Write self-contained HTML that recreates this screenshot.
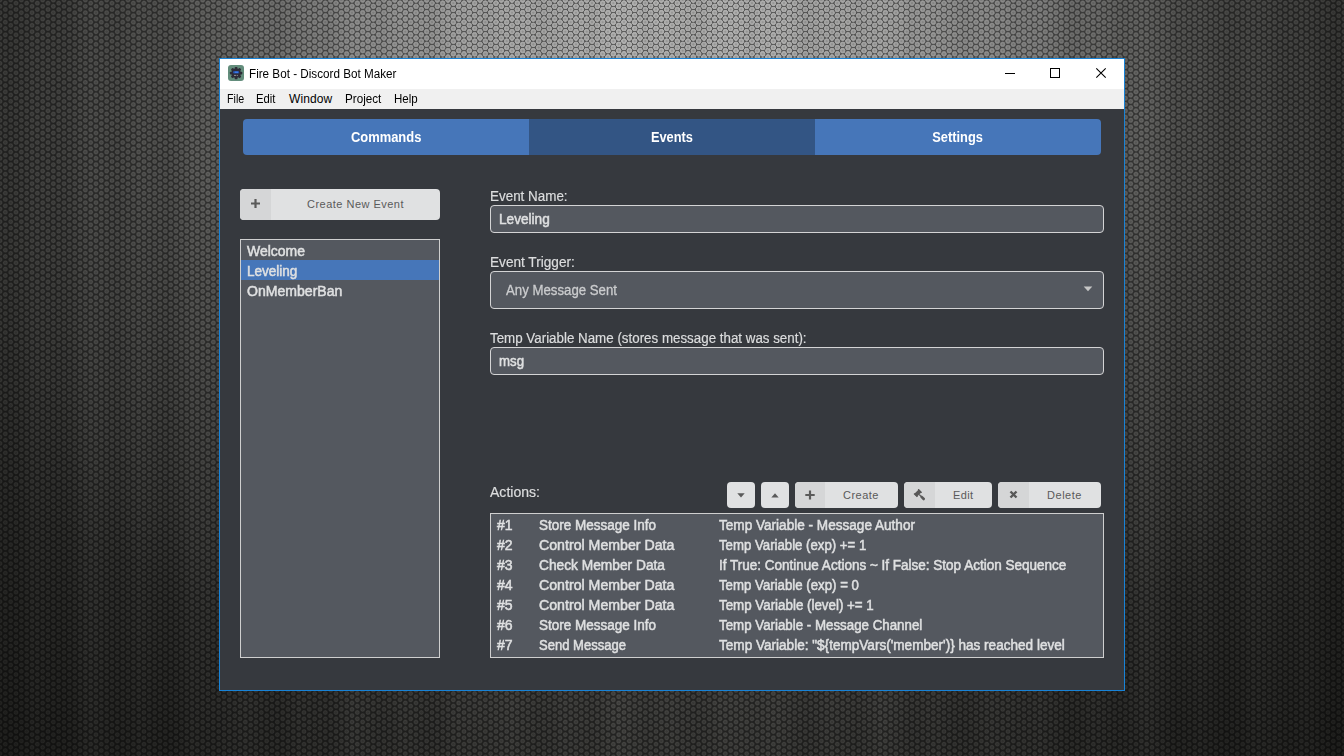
<!DOCTYPE html>
<html>
<head>
<meta charset="utf-8">
<title>Fire Bot - Discord Bot Maker</title>
<style>
*{box-sizing:border-box;margin:0;padding:0}
html,body{width:1344px;height:756px;overflow:hidden}
body{position:relative;background:#262626;font-family:"Liberation Sans",sans-serif;}
#bg{position:absolute;left:0;top:0;width:1344px;height:756px;
 background:radial-gradient(ellipse 820px 400px at 672px 270px, rgba(255,255,255,.05) 0%, rgba(255,255,255,.045) 55%, rgba(255,255,255,.02) 80%, rgba(255,255,255,0) 100%), radial-gradient(ellipse 520px 260px at 672px 780px, rgba(255,250,240,0.05) 0%, rgba(255,250,240,0.03) 50%, rgba(255,250,240,0) 100%), radial-gradient(circle 1010px at 672px 0px, rgb(172,172,171) 0.0%, rgb(168,168,167) 11.9%, rgb(156,156,155) 22.8%, rgb(145,145,144) 27.7%, rgb(125,125,124) 35.6%, rgb(99,99,97) 44.6%, rgb(81,81,79) 51.5%, rgb(71,71,69) 57.4%, rgb(62,62,60) 64.4%, rgb(55,55,53) 71.3%, rgb(48,48,46) 77.2%, rgb(40,40,38) 87.1%, rgb(34,34,32) 97.0%, rgb(33,33,31) 100.0%);
}
#streaks{position:absolute;left:0;top:0;width:1344px;height:756px;background:repeating-linear-gradient(90deg, rgba(0,0,0,0) 0px, rgba(0,0,0,.035) 9px, rgba(0,0,0,0) 21px, rgba(255,255,255,.02) 34px, rgba(0,0,0,0) 53px),repeating-linear-gradient(90deg, rgba(0,0,0,0) 0px, rgba(0,0,0,.03) 29px, rgba(0,0,0,0) 67px, rgba(255,255,255,.02) 95px, rgba(0,0,0,0) 131px)}
#tex{position:absolute;left:0;top:0;width:1344px;height:756px}
#win{position:absolute;left:219px;top:58px;width:906px;height:633px;border:1px solid #1883d7;background:#36393e;overflow:hidden}
/* everything inside #win is positioned relative to window inner origin (220,59) */
#titlebar{position:absolute;left:0;top:0;width:904px;height:30px;background:#fff}
#menubar{position:absolute;left:0;top:30px;width:904px;height:20px;background:#f0f0f0}
.t{position:absolute;white-space:nowrap;line-height:1;display:block}
.title{left:29px;top:8px;font-size:12px;color:#000;height:14px;line-height:14px}
.mi{top:33px;font-size:12px;color:#000;height:14px;line-height:14px}
.tab{position:absolute;top:60px;height:36px;width:286px;background:#4676b9;color:#fff;font-weight:bold;font-size:14px;text-align:center;line-height:36px}
.tab.sel{background:#335584}
.btn{position:absolute;background:#e0e1e2;border-radius:4px;color:#5a5a5a;font-size:11px;overflow:hidden}
.btn .ic{position:absolute;left:0;top:0;bottom:0;background:#d5d6d7}
.lbl{font-size:14px;color:#dcddde;-webkit-text-stroke:0.2px #dcddde}
.inp{position:absolute;left:270px;width:614px;background:#54585f;border:1px solid #d4d4d5;border-radius:4px}
.box{position:absolute;background:#54585f;border:1px solid #cfcfcf}
.li{font-size:14px;font-weight:normal;color:#dfe0e1;-webkit-text-stroke:0.5px #dfe0e1}
.row{position:absolute;left:0;width:100%;height:20px}
</style>
</head>
<body>
<div id="bg"></div>
<div id="streaks"></div>
<svg id="tex" width="1344" height="756">
 <defs>
  <radialGradient id="dgA" cx="50%" cy="50%" r="50%">
   <stop offset="0" stop-color="#4c4c4c"/>
   <stop offset="0.25" stop-color="#3a3a3a"/>
   <stop offset="0.48" stop-color="#000"/>
   <stop offset="0.84" stop-color="#000"/>
   <stop offset="1" stop-color="#fff"/>
  </radialGradient>
  <radialGradient id="dgB" cx="50%" cy="50%" r="50%">
   <stop offset="0" stop-color="#000"/>
   <stop offset="0.60" stop-color="#000"/>
   <stop offset="0.80" stop-color="#fff"/>
   <stop offset="0.88" stop-color="#fff"/>
   <stop offset="1" stop-color="#000"/>
  </radialGradient>
  <pattern id="hpA" width="32" height="19" patternUnits="userSpaceOnUse"><rect width="32" height="19" fill="#fff"/><circle cx="0.000" cy="0.000" r="3.08" fill="url(#dgA)"/><circle cx="0.000" cy="6.333" r="3.08" fill="url(#dgA)"/><circle cx="0.000" cy="12.667" r="3.08" fill="url(#dgA)"/><circle cx="0.000" cy="19.000" r="3.08" fill="url(#dgA)"/><circle cx="5.333" cy="-3.167" r="3.08" fill="url(#dgA)"/><circle cx="5.333" cy="3.167" r="3.08" fill="url(#dgA)"/><circle cx="5.333" cy="9.500" r="3.08" fill="url(#dgA)"/><circle cx="5.333" cy="15.833" r="3.08" fill="url(#dgA)"/><circle cx="5.333" cy="22.167" r="3.08" fill="url(#dgA)"/><circle cx="10.667" cy="0.000" r="3.08" fill="url(#dgA)"/><circle cx="10.667" cy="6.333" r="3.08" fill="url(#dgA)"/><circle cx="10.667" cy="12.667" r="3.08" fill="url(#dgA)"/><circle cx="10.667" cy="19.000" r="3.08" fill="url(#dgA)"/><circle cx="16.000" cy="-3.167" r="3.08" fill="url(#dgA)"/><circle cx="16.000" cy="3.167" r="3.08" fill="url(#dgA)"/><circle cx="16.000" cy="9.500" r="3.08" fill="url(#dgA)"/><circle cx="16.000" cy="15.833" r="3.08" fill="url(#dgA)"/><circle cx="16.000" cy="22.167" r="3.08" fill="url(#dgA)"/><circle cx="21.333" cy="0.000" r="3.08" fill="url(#dgA)"/><circle cx="21.333" cy="6.333" r="3.08" fill="url(#dgA)"/><circle cx="21.333" cy="12.667" r="3.08" fill="url(#dgA)"/><circle cx="21.333" cy="19.000" r="3.08" fill="url(#dgA)"/><circle cx="26.667" cy="-3.167" r="3.08" fill="url(#dgA)"/><circle cx="26.667" cy="3.167" r="3.08" fill="url(#dgA)"/><circle cx="26.667" cy="9.500" r="3.08" fill="url(#dgA)"/><circle cx="26.667" cy="15.833" r="3.08" fill="url(#dgA)"/><circle cx="26.667" cy="22.167" r="3.08" fill="url(#dgA)"/><circle cx="32.000" cy="0.000" r="3.08" fill="url(#dgA)"/><circle cx="32.000" cy="6.333" r="3.08" fill="url(#dgA)"/><circle cx="32.000" cy="12.667" r="3.08" fill="url(#dgA)"/><circle cx="32.000" cy="19.000" r="3.08" fill="url(#dgA)"/></pattern>
  <pattern id="hpB" width="32" height="19" patternUnits="userSpaceOnUse"><rect width="32" height="19" fill="#000"/><circle cx="0.000" cy="0.000" r="3.08" fill="url(#dgB)"/><circle cx="0.000" cy="6.333" r="3.08" fill="url(#dgB)"/><circle cx="0.000" cy="12.667" r="3.08" fill="url(#dgB)"/><circle cx="0.000" cy="19.000" r="3.08" fill="url(#dgB)"/><circle cx="5.333" cy="-3.167" r="3.08" fill="url(#dgB)"/><circle cx="5.333" cy="3.167" r="3.08" fill="url(#dgB)"/><circle cx="5.333" cy="9.500" r="3.08" fill="url(#dgB)"/><circle cx="5.333" cy="15.833" r="3.08" fill="url(#dgB)"/><circle cx="5.333" cy="22.167" r="3.08" fill="url(#dgB)"/><circle cx="10.667" cy="0.000" r="3.08" fill="url(#dgB)"/><circle cx="10.667" cy="6.333" r="3.08" fill="url(#dgB)"/><circle cx="10.667" cy="12.667" r="3.08" fill="url(#dgB)"/><circle cx="10.667" cy="19.000" r="3.08" fill="url(#dgB)"/><circle cx="16.000" cy="-3.167" r="3.08" fill="url(#dgB)"/><circle cx="16.000" cy="3.167" r="3.08" fill="url(#dgB)"/><circle cx="16.000" cy="9.500" r="3.08" fill="url(#dgB)"/><circle cx="16.000" cy="15.833" r="3.08" fill="url(#dgB)"/><circle cx="16.000" cy="22.167" r="3.08" fill="url(#dgB)"/><circle cx="21.333" cy="0.000" r="3.08" fill="url(#dgB)"/><circle cx="21.333" cy="6.333" r="3.08" fill="url(#dgB)"/><circle cx="21.333" cy="12.667" r="3.08" fill="url(#dgB)"/><circle cx="21.333" cy="19.000" r="3.08" fill="url(#dgB)"/><circle cx="26.667" cy="-3.167" r="3.08" fill="url(#dgB)"/><circle cx="26.667" cy="3.167" r="3.08" fill="url(#dgB)"/><circle cx="26.667" cy="9.500" r="3.08" fill="url(#dgB)"/><circle cx="26.667" cy="15.833" r="3.08" fill="url(#dgB)"/><circle cx="26.667" cy="22.167" r="3.08" fill="url(#dgB)"/><circle cx="32.000" cy="0.000" r="3.08" fill="url(#dgB)"/><circle cx="32.000" cy="6.333" r="3.08" fill="url(#dgB)"/><circle cx="32.000" cy="12.667" r="3.08" fill="url(#dgB)"/><circle cx="32.000" cy="19.000" r="3.08" fill="url(#dgB)"/></pattern>
  <mask id="hmA" maskUnits="userSpaceOnUse" x="0" y="0" width="1344" height="756"><rect width="1344" height="756" fill="url(#hpA)"/></mask>
  <mask id="hmB" maskUnits="userSpaceOnUse" x="0" y="0" width="1344" height="756"><rect width="1344" height="756" fill="url(#hpB)"/></mask>
  <radialGradient id="rgB" gradientUnits="userSpaceOnUse" cx="672" cy="0" r="1010">
   <stop offset="0" stop-color="#000" stop-opacity="0"/>
   <stop offset="0.18" stop-color="#000" stop-opacity="0.04"/>
   <stop offset="0.40" stop-color="#000" stop-opacity="0.20"/>
   <stop offset="0.58" stop-color="#000" stop-opacity="0.30"/>
   <stop offset="1" stop-color="#000" stop-opacity="0.34"/>
  </radialGradient>
 </defs>
 <rect width="1344" height="756" fill="#000" opacity="0.47" mask="url(#hmA)"/>
 <rect width="1344" height="756" fill="url(#rgB)" mask="url(#hmB)"/>
</svg>

<div id="win">
 <div id="titlebar"></div>
 <div id="menubar"></div>
 <!-- app icon -->
 <svg class="t" style="left:8px;top:6px" width="16" height="16" viewBox="0 0 16 16">
  <rect x="0" y="0" width="16" height="16" rx="3" fill="#638d7c"/>
  <g fill="#2e2c38">
   <circle cx="8.1" cy="8.1" r="4.7"/>
   <rect x="6.7" y="1.9" width="2.8" height="12.4" rx=".9"/>
   <rect x="1.9" y="6.7" width="12.4" height="2.8" rx=".9"/>
   <rect x="6.7" y="1.9" width="2.8" height="12.4" rx=".9" transform="rotate(45 8.1 8.1)"/>
   <rect x="6.7" y="1.9" width="2.8" height="12.4" rx=".9" transform="rotate(-45 8.1 8.1)"/>
  </g>
  <rect x="5" y="6.1" width="6.2" height="2.4" rx="1.1" fill="#264fa6"/>
  <rect x="6.6" y="6.6" width="3.6" height="1.5" rx=".7" fill="#3b7be8"/>
  <rect x="6.2" y="9.9" width="1.6" height=".9" fill="#b9b9bd"/>
  <rect x="8.7" y="9.9" width="1.1" height=".9" fill="#a3a3a8"/>
 </svg>
 <span class="t title" id="ttl" style="transform-origin:0 50%;transform:scaleX(0.9737);">Fire Bot - Discord Bot Maker</span>
 <!-- window controls -->
 <svg class="t" style="left:780px;top:5px" width="120" height="20" viewBox="0 0 120 20">
  <rect x="5" y="9" width="10" height="1" fill="#000"/>
  <rect x="50.5" y="4.5" width="9" height="9" fill="none" stroke="#000" stroke-width="1"/>
  <path d="M96.3 4.3 L105.7 13.7 M105.7 4.3 L96.3 13.7" stroke="#000" stroke-width="1.1" fill="none"/>
 </svg>
 <span class="t mi" id="m1" style="transform-origin:0 50%;transform:scaleX(0.8892);left:7px">File</span>
 <span class="t mi" id="m2" style="transform-origin:0 50%;transform:scaleX(0.9426);left:36px">Edit</span>
 <span class="t mi" id="m3" style="letter-spacing:0.119px;left:69px">Window</span>
 <span class="t mi" id="m4" style="transform-origin:0 50%;transform:scaleX(0.9716);left:125px">Project</span>
 <span class="t mi" id="m5" style="transform-origin:0 50%;transform:scaleX(0.9600);left:174px">Help</span>

 <!-- tabs -->
 <div class="tab" style="left:23px;border-radius:4px 0 0 4px"><span id="tb1" style="display:inline-block;transform:scaleX(0.9235);">Commands</span></div>
 <div class="tab sel" style="left:309px"><span id="tb2" style="display:inline-block;transform:scaleX(0.9146);">Events</span></div>
 <div class="tab" style="left:595px;border-radius:0 4px 4px 0"><span id="tb3" style="display:inline-block;transform:scaleX(0.9161);">Settings</span></div>

 <!-- create new event button -->
 <div class="btn" style="left:20px;top:130px;width:200px;height:31px">
  <div class="ic" style="width:31px"></div>
  <svg class="t" style="left:10px;top:9px" width="11" height="11" viewBox="0 0 11 11"><path d="M4.4 1h2.2v3.4H10v2.2H6.6V10H4.4V6.6H1V4.4h3.4z" fill="#5a5a5a"/></svg>
  <span class="t" id="cne" style="letter-spacing:0.483px;left:67px;top:10px">Create New Event</span>
 </div>

 <!-- event list -->
 <div class="box" style="left:20px;top:180px;width:200px;height:419px">
  <div class="row" style="top:0"><span class="t li" id="e1" style="transform-origin:0 50%;transform:scaleX(0.9984);left:6px;top:4px">Welcome</span></div>
  <div class="row" style="top:20px;background:#4676b9"><span class="t li" id="e2" style="transform-origin:0 50%;transform:scaleX(0.9663);left:6px;top:4px">Leveling</span></div>
  <div class="row" style="top:40px"><span class="t li" id="e3" style="transform-origin:0 50%;transform:scaleX(1.0049);left:6px;top:4px">OnMemberBan</span></div>
 </div>

 <!-- form -->
 <span class="t lbl" id="l1" style="transform-origin:0 50%;transform:scaleX(0.9588);left:270px;top:130px">Event Name:</span>
 <div class="inp" style="top:146px;height:28px"><span class="t li" id="i1" style="transform-origin:0 50%;transform:scaleX(0.9721);left:8px;top:6px">Leveling</span></div>
 <span class="t lbl" id="l2" style="transform-origin:0 50%;transform:scaleX(0.9730);left:270px;top:196px">Event Trigger:</span>
 <div class="inp" style="top:212px;height:38px"><span class="t" id="i2" style="transform-origin:0 50%;transform:scaleX(0.9446);left:15px;top:11px;font-size:14px;color:#cbccce;-webkit-text-stroke:0.3px #cbccce">Any Message Sent</span>
  <svg class="t" style="left:592px;top:13.5px" width="10" height="6" viewBox="0 0 10 6"><path d="M0.7 0.5h8.6L5 5.3z" fill="#c6c6c6"/></svg>
 </div>
 <span class="t lbl" id="l3" style="transform-origin:0 50%;transform:scaleX(0.9536);left:270px;top:272px">Temp Variable Name (stores message that was sent):</span>
 <div class="inp" style="top:288px;height:28px"><span class="t li" id="i3" style="transform-origin:0 50%;transform:scaleX(0.9451);left:8px;top:6px">msg</span></div>

 <span class="t lbl" id="l4" style="transform-origin:0 50%;transform:scaleX(1.0038);left:270px;top:426px">Actions:</span>

 <!-- action buttons -->
 <div class="btn" style="left:507px;top:423px;width:28px;height:26px">
  <svg class="t" style="left:10px;top:10.7px" width="8" height="5" viewBox="0 0 8 5"><path d="M0.3 0.3h7.4L4 4.4z" fill="#5a5a5a"/></svg>
 </div>
 <div class="btn" style="left:541px;top:423px;width:28px;height:26px">
  <svg class="t" style="left:10px;top:10.7px" width="8" height="5" viewBox="0 0 8 5"><path d="M0.3 4.4h7.4L4 0.3z" fill="#5a5a5a"/></svg>
 </div>
 <div class="btn" style="left:575px;top:423px;width:103px;height:26px">
  <div class="ic" style="width:30px"></div>
  <svg class="t" style="left:10px;top:7.6px" width="10" height="10" viewBox="0 0 10 10"><path d="M3.9 0.4h2.2V3.9h3.6v2.2H6.1v3.5H3.9V6.1H0.3V3.9h3.6z" fill="#5a5a5a"/></svg>
  <span class="t" id="b1" style="letter-spacing:0.495px;left:48px;top:8px">Create</span>
 </div>
 <div class="btn" style="left:684px;top:423px;width:88px;height:26px">
  <div class="ic" style="width:31px"></div>
  <svg class="t" style="left:0;top:0" width="31" height="26" viewBox="0 0 31 26"><g fill="#585858" transform="translate(13.8 11.1) rotate(-45)"><rect x="-3.2" y="-2.0" width="6.4" height="4.0"/><rect x="-3.6" y="-2.45" width="1.3" height="4.9" rx=".4"/><rect x="2.3" y="-2.45" width="1.3" height="4.9" rx=".4"/><rect x="-0.6" y="2" width="1.2" height="2.6"/><rect x="-1.3" y="4.1" width="2.6" height="5.5" rx="1.2"/></g></svg>
  <span class="t" id="b2" style="letter-spacing:0.383px;left:49px;top:8px">Edit</span>
 </div>
 <div class="btn" style="left:778px;top:423px;width:103px;height:26px">
  <div class="ic" style="width:31px"></div>
  <svg class="t" style="left:10.9px;top:8.2px" width="9" height="9" viewBox="0 0 9 9"><path d="M1.5 1.5L7.5 7.5M7.5 1.5L1.5 7.5" stroke="#585858" stroke-width="2.4" fill="none"/></svg>
  <span class="t" id="b3" style="letter-spacing:0.534px;left:49px;top:8px">Delete</span>
 </div>

 <!-- actions list -->
 <div class="box" id="alist" style="left:270px;top:454px;width:614px;height:145px">
  <div class="row" style="top:0px"><span class="t li" id="a0a" style="transform-origin:0 50%;transform:scaleX(1.0014);left:6px;top:4px">#1</span><span class="t li" id="a0b" style="transform-origin:0 50%;transform:scaleX(0.9637);left:48px;top:4px">Store Message Info</span><span class="t li" id="a0c" style="transform-origin:0 50%;transform:scaleX(0.9699);left:228px;top:4px">Temp Variable - Message Author</span></div>
  <div class="row" style="top:20px"><span class="t li" id="a1a" style="transform-origin:0 50%;transform:scaleX(1.0014);left:6px;top:4px">#2</span><span class="t li" id="a1b" style="transform-origin:0 50%;transform:scaleX(1.0117);left:48px;top:4px">Control Member Data</span><span class="t li" id="a1c" style="transform-origin:0 50%;transform:scaleX(0.9433);left:228px;top:4px">Temp Variable (exp) += 1</span></div>
  <div class="row" style="top:40px"><span class="t li" id="a2a" style="transform-origin:0 50%;transform:scaleX(1.0014);left:6px;top:4px">#3</span><span class="t li" id="a2b" style="transform-origin:0 50%;transform:scaleX(0.9814);left:48px;top:4px">Check Member Data</span><span class="t li" id="a2c" style="transform-origin:0 50%;transform:scaleX(0.9648);left:228px;top:4px">If True: Continue Actions ~ If False: Stop Action Sequence</span></div>
  <div class="row" style="top:60px"><span class="t li" id="a3a" style="transform-origin:0 50%;transform:scaleX(1.0014);left:6px;top:4px">#4</span><span class="t li" id="a3b" style="transform-origin:0 50%;transform:scaleX(1.0117);left:48px;top:4px">Control Member Data</span><span class="t li" id="a3c" style="transform-origin:0 50%;transform:scaleX(0.9454);left:228px;top:4px">Temp Variable (exp) = 0</span></div>
  <div class="row" style="top:80px"><span class="t li" id="a4a" style="transform-origin:0 50%;transform:scaleX(1.0014);left:6px;top:4px">#5</span><span class="t li" id="a4b" style="transform-origin:0 50%;transform:scaleX(1.0117);left:48px;top:4px">Control Member Data</span><span class="t li" id="a4c" style="transform-origin:0 50%;transform:scaleX(0.9533);left:228px;top:4px">Temp Variable (level) += 1</span></div>
  <div class="row" style="top:100px"><span class="t li" id="a5a" style="transform-origin:0 50%;transform:scaleX(1.0014);left:6px;top:4px">#6</span><span class="t li" id="a5b" style="transform-origin:0 50%;transform:scaleX(0.9637);left:48px;top:4px">Store Message Info</span><span class="t li" id="a5c" style="transform-origin:0 50%;transform:scaleX(0.9511);left:228px;top:4px">Temp Variable - Message Channel</span></div>
  <div class="row" style="top:120px"><span class="t li" id="a6a" style="transform-origin:0 50%;transform:scaleX(1.0014);left:6px;top:4px">#7</span><span class="t li" id="a6b" style="transform-origin:0 50%;transform:scaleX(0.9314);left:48px;top:4px">Send Message</span><span class="t li" id="a6c" style="transform-origin:0 50%;transform:scaleX(0.9690);left:228px;top:4px">Temp Variable: &quot;${tempVars('member')} has reached level</span></div>
 </div>
</div>
</body>
</html>
